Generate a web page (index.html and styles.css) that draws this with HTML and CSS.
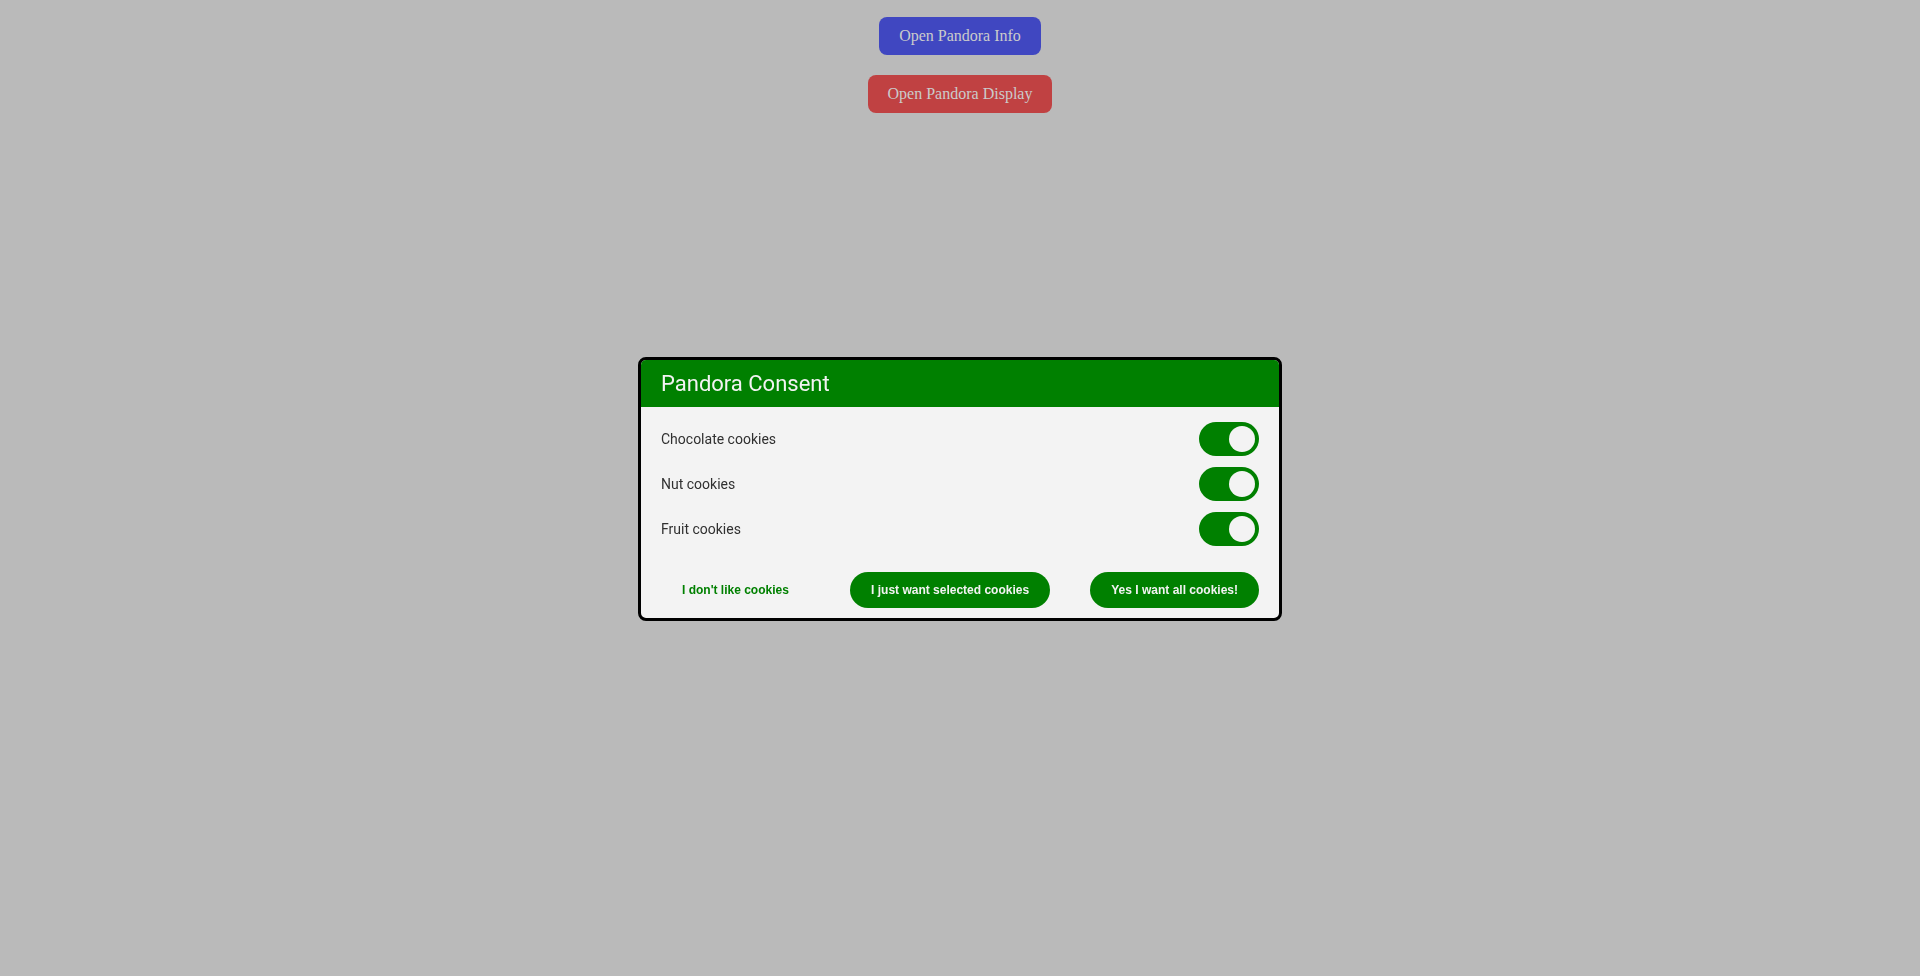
FILE: index.html
```html
<!DOCTYPE html>
<html lang="en">
<head>
<meta charset="utf-8">
<title>Pandora Consent</title>
<link rel="stylesheet" href="styles.css">
</head>
<body>
  <div class="launchers">
    <button class="launch launch-info">Open Pandora Info</button>
    <button class="launch launch-display">Open Pandora Display</button>
  </div>

  <div class="dialog">
    <div class="dialog-header">Pandora Consent</div>
    <div class="dialog-body">
      <div class="option">
        <span class="option-label">Chocolate cookies</span>
        <span class="switch"><span class="knob"></span></span>
      </div>
      <div class="option">
        <span class="option-label">Nut cookies</span>
        <span class="switch"><span class="knob"></span></span>
      </div>
      <div class="option">
        <span class="option-label">Fruit cookies</span>
        <span class="switch"><span class="knob"></span></span>
      </div>
      <div class="actions">
        <button class="act act-plain">I don't like cookies</button>
        <button class="act act-filled">I just want selected cookies</button>
        <button class="act act-filled">Yes I want all cookies!</button>
      </div>
    </div>
  </div>
</body>
</html>
```

FILE: styles.css
```css
html, body {
  margin: 0;
  padding: 0;
}

body {
  background: #bababa;
  width: 1920px;
  height: 976px;
  font-family: "Liberation Serif", "Times New Roman", serif;
}

.launchers {
  display: flex;
  flex-direction: column;
  align-items: center;
  gap: 20px;
  padding-top: 17px;
}

.launch {
  font-family: "Liberation Serif", "Times New Roman", serif;
  font-size: 16px;
  line-height: 18px;
  color: #cbcbcb;
  border: none;
  border-radius: 8px;
  padding: 10px 20px;
  cursor: pointer;
}

.launch-info {
  background: #4047c1;
}

.launch-display {
  background: #c04142;
}

.dialog {
  position: fixed;
  left: 638px;
  top: 357px;
  width: 644px;
  box-sizing: border-box;
  border: 3px solid #000;
  border-radius: 8px;
  background: #f3f3f3;
  overflow: hidden;
  font-family: Roboto, "Liberation Sans", sans-serif;
}

.dialog-header {
  background: #008000;
  color: #f3f3f3;
  font-size: 22px;
  line-height: 27px;
  padding: 10px 20px;
}

.dialog-body {
  padding: 15px 20px 10px;
  display: flex;
  flex-direction: column;
  gap: 11px;
}

.option {
  display: flex;
  align-items: center;
  justify-content: space-between;
  height: 34px;
}

.option-label {
  font-size: 14px;
  color: #303030;
}

.switch {
  position: relative;
  width: 60px;
  height: 34px;
  border-radius: 17px;
  background: #008000;
}

.knob {
  position: absolute;
  top: 4px;
  right: 4px;
  width: 26px;
  height: 26px;
  border-radius: 50%;
  background: #f3f3f3;
}

.actions {
  display: flex;
  justify-content: space-between;
  align-items: center;
  margin-top: 15px;
}

.act {
  font-family: "Liberation Sans", Arial, sans-serif;
  font-weight: bold;
  font-size: 12px;
  height: 36px;
  padding: 0 21px;
  border: none;
  border-radius: 18px;
  cursor: pointer;
}

.act-plain {
  background: transparent;
  color: #008000;
}

.act-filled {
  background: #008000;
  color: #f3f3f3;
}
```
